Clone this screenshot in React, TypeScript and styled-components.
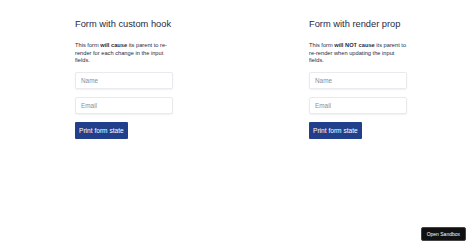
import React from 'react'
import styled, { createGlobalStyle } from 'styled-components'

const GlobalStyle = createGlobalStyle`
  html, body {
    margin: 0;
    padding: 0;
    background: #fff;
  }
  body {
    font-family: "Liberation Sans", Arial, sans-serif;
    color: #1f2a44;
  }
`

type FormProps = {
  title: string
  lead: string
  strong: string
  rest: string
}

function DemoForm({ title, lead, strong, rest }: FormProps): JSX.Element {
  return (
    <S.Column>
      <S.Title>{title}</S.Title>
      <S.Text>
        {lead}
        <b>{strong}</b>
        {rest}
      </S.Text>
      <S.Input type="text" placeholder="Name" />
      <S.Input type="text" placeholder="Email" />
      <S.Button type="button">Print form state</S.Button>
    </S.Column>
  )
}

function App(): JSX.Element {
  return (
    <>
      <GlobalStyle />
      <S.Page>
        <DemoForm
          title="Form with custom hook"
          lead="This form "
          strong="will cause"
          rest=" its parent to re-render for each change in the input fields."
        />
        <DemoForm
          title="Form with render prop"
          lead="This form "
          strong="will NOT cause"
          rest=" its parent to re-render when updating the input fields."
        />
      </S.Page>
      <S.Sandbox>Open Sandbox</S.Sandbox>
    </>
  )
}

const S = {
  Page: styled.div`
    display: grid;
    grid-template-columns: 234px 234px;
    padding: 17px 0 0 75px;
    height: 231px;
  `,
  Column: styled.div`
    display: flex;
    flex-direction: column;
    align-items: flex-start;
    width: 98px;
  `,
  Title: styled.h2`
    margin: 0 0 11px;
    font-size: 9.3px;
    font-weight: 400;
    line-height: 14px;
    white-space: nowrap;
    color: #1f2a44;
  `,
  Text: styled.p`
    margin: 0 0 7px;
    width: 101px;
    font-size: 5.7px;
    line-height: 7.6px;
    color: #1f2a44;
    b {
      font-weight: 700;
    }
  `,
  Input: styled.input`
    box-sizing: border-box;
    width: 98px;
    height: 17px;
    margin: 0 0 8px;
    padding: 0 5px;
    border: 1px solid #e8eaee;
    border-radius: 2px;
    box-shadow: 0 1px 2px rgba(0, 0, 0, 0.06);
    font-family: inherit;
    font-size: 6.4px;
    color: #333;
    outline: none;
    &::placeholder {
      color: #8a8f98;
    }
  `,
  Button: styled.button`
    height: 17px;
    padding: 0 4px;
    border: 0;
    border-radius: 1px;
    background: #213f8a;
    color: #fff;
    font-family: inherit;
    font-size: 6.6px;
    cursor: pointer;
  `,
  Sandbox: styled.button`
    position: fixed;
    right: 8px;
    bottom: 7px;
    height: 14px;
    padding: 0 5px;
    border: 1px solid #444;
    border-radius: 2px;
    background: #111;
    color: #fff;
    font-family: inherit;
    font-size: 5px;
  `,
}

export default App
